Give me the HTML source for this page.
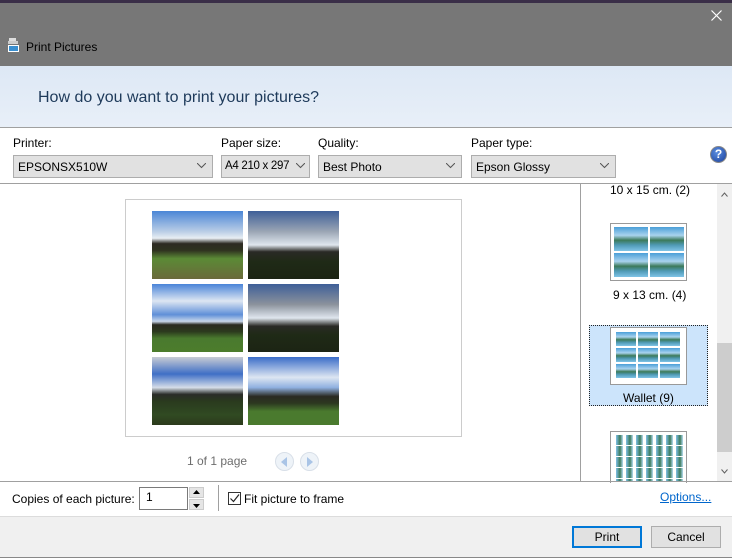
<!DOCTYPE html>
<html><head><meta charset="utf-8"><style>
*{box-sizing:border-box;margin:0;padding:0}
body{width:732px;height:558px;overflow:hidden;font-family:"Liberation Sans",sans-serif;font-size:12px;color:#000;background:#fff;position:relative}
.a{position:absolute}
.sel{position:absolute;top:155px;height:23px;background:#e1e1e1;border:1px solid #adadad;padding:4px 0 0 4px;font-size:12px;white-space:nowrap;overflow:hidden}
.sel svg{position:absolute;right:6px;top:7px}
.lbl{position:absolute;top:136px;font-size:12px}
.ph{position:absolute;width:91px;height:68px}
.btn{position:absolute;top:526px;height:22px;background:#e1e1e1;border:1px solid #adadad;text-align:center;padding-top:3px}
.th{position:absolute;background:#fff;border:1px solid #999;}
.mini{position:absolute;background:linear-gradient(#4a9fd8 0%,#a9d3ee 35%,#3c7a5a 55%,#4f9ab5 75%,#7fc3e6 100%)}
</style></head><body>
<div class="a" style="left:0;top:0;width:732px;height:3px;background:#3a2e48"></div>
<div class="a" style="left:0;top:3px;width:732px;height:63px;background:#777"></div>
<svg class="a" style="left:711px;top:10px" width="11" height="11"><path d="M0.5 0.5L10.5 10.5M10.5 0.5L0.5 10.5" stroke="#fff" stroke-width="1.2"/></svg>
<svg class="a" style="left:7px;top:38px" width="12" height="14"><rect x="2" y="0" width="7" height="3" fill="#ddd"/><rect x="1" y="3" width="10" height="3" fill="#ccc"/><rect x="1" y="7" width="11" height="7" fill="#fff"/><rect x="2" y="8" width="9" height="5" fill="#3a8fd0"/></svg>
<div class="a" style="left:26px;top:40px;color:#000;font-size:12px">Print Pictures</div>
<div class="a" style="left:0;top:66px;width:732px;height:61px;background:linear-gradient(#dde8f5,#e8eff8)"></div>
<div class="a" style="left:38px;top:89px;font-size:16px;color:#1e3a5a">How do you want to print your pictures?</div>
<div class="a" style="left:0;top:127px;width:732px;height:1px;background:#a0a0a0"></div>
<div class="lbl" style="left:13px">Printer:</div>
<div class="lbl" style="left:221px">Paper size:</div>
<div class="lbl" style="left:318px">Quality:</div>
<div class="lbl" style="left:471px">Paper type:</div>
<div class="sel" style="left:13px;width:200px">EPSONSX510W<svg width="9" height="6"><path d="M0 0L4.5 4.5L9 0" stroke="#555" fill="none"/></svg></div>
<div class="sel" style="left:221px;width:89px;padding-left:3px;font-size:11.5px;letter-spacing:-0.3px">A4 210 x 297<svg width="9" height="6" style="right:4px"><path d="M0 0L4.5 4.5L9 0" stroke="#555" fill="none"/></svg></div>
<div class="sel" style="left:318px;width:144px">Best Photo<svg width="9" height="6"><path d="M0 0L4.5 4.5L9 0" stroke="#555" fill="none"/></svg></div>
<div class="sel" style="left:471px;width:145px">Epson Glossy<svg width="9" height="6"><path d="M0 0L4.5 4.5L9 0" stroke="#555" fill="none"/></svg></div>
<div class="a" style="left:710px;top:146px;width:17px;height:17px;border-radius:50%;background:radial-gradient(circle at 40% 35%,#5b8ee0,#1a3f9a);border:1px solid #888;color:#fff;font-weight:bold;font-size:12px;text-align:center;line-height:15px">?</div>
<div class="a" style="left:0;top:183px;width:732px;height:1px;background:#a0a0a0"></div>
<div class="a" style="left:125px;top:199px;width:337px;height:238px;border:1px solid #ccc"></div>
<div class="ph" style="left:152px;top:211px;background:linear-gradient(#4a86d6 0%,#b9cde6 30%,#e8eef4 40%,#2d2a22 48%,#2f3320 58%,#5b8a36 70%,#6a6a3a 100%)"></div>
<div class="ph" style="left:248px;top:211px;background:linear-gradient(#3e5f98 0%,#9aa5b4 30%,#dfe6ee 50%,#2a2a26 60%,#1f2a16 75%,#1c2414 100%)"></div>
<div class="ph" style="left:152px;top:284px;background:linear-gradient(#4a84d8 0%,#dde6f2 25%,#5f8fd8 45%,#c9d7ea 55%,#2a2a20 60%,#2c3a1e 70%,#4a7a2e 80%,#4c7c2c 100%)"></div>
<div class="ph" style="left:248px;top:284px;background:linear-gradient(#3e5f98 0%,#8b929c 30%,#dfe6ee 50%,#2a2a26 62%,#1f2a16 75%,#1c2414 100%)"></div>
<div class="ph" style="left:152px;top:357px;background:linear-gradient(#c8ccd4 0%,#3f6fc6 25%,#d6dde8 45%,#2a2c28 55%,#2a3a1e 65%,#304a22 85%,#2c3a1c 100%)"></div>
<div class="ph" style="left:248px;top:357px;background:linear-gradient(#3a6cc8 0%,#dde6f2 30%,#8fb0e0 45%,#2a2a22 58%,#2c3820 68%,#4a7a2e 80%,#4a7a2e 100%)"></div>
<div class="a" style="left:187px;top:454px;color:#6d6d6d;font-size:12px">1 of 1 page</div>
<div class="a" style="left:275px;top:452px;width:19px;height:19px;border-radius:50%;border:1px solid #d8dfe8;background:#eef3f8"></div>
<svg class="a" style="left:280px;top:457px" width="9" height="10"><path d="M7 0L1 5L7 10Z" fill="#a9c4e6"/></svg>
<div class="a" style="left:300px;top:452px;width:19px;height:19px;border-radius:50%;border:1px solid #d8dfe8;background:#eef3f8"></div>
<svg class="a" style="left:306px;top:457px" width="9" height="10"><path d="M1 0L7 5L1 10Z" fill="#a9c4e6"/></svg>
<div class="a" style="left:580px;top:184px;width:1px;height:297px;background:#a0a0a0"></div>
<div class="a" style="left:717px;top:184px;width:15px;height:297px;background:#f0f0f0"></div>
<div class="a" style="left:717px;top:343px;width:15px;height:109px;background:#cdcdcd"></div>
<svg class="a" style="left:721px;top:192px" width="7" height="5"><path d="M0.5 4.5L3.5 1L6.5 4.5" stroke="#606060" fill="none"/></svg>
<svg class="a" style="left:721px;top:469px" width="7" height="5"><path d="M0.5 0.5L3.5 4L6.5 0.5" stroke="#606060" fill="none"/></svg>
<div class="a" style="left:610px;top:183px;font-size:12px">10 x 15 cm. (2)</div>
<div class="th" style="left:610px;top:223px;width:77px;height:58px"></div>
<div class="mini" style="left:614px;top:227px;width:34px;height:24px"></div>
<div class="mini" style="left:650px;top:227px;width:34px;height:24px"></div>
<div class="mini" style="left:614px;top:253px;width:34px;height:24px"></div>
<div class="mini" style="left:650px;top:253px;width:34px;height:24px"></div>
<div class="a" style="left:613px;top:288px;font-size:12px">9 x 13 cm. (4)</div>
<div class="a" style="left:589px;top:325px;width:119px;height:81px;background:#cce4fb;border:1px dotted #222"></div>
<div class="th" style="left:610px;top:327px;width:77px;height:58px"></div>
<div class="mini" style="left:616px;top:332px;width:20px;height:14px"></div>
<div class="mini" style="left:638px;top:332px;width:20px;height:14px"></div>
<div class="mini" style="left:660px;top:332px;width:20px;height:14px"></div>
<div class="mini" style="left:616px;top:348px;width:20px;height:14px"></div>
<div class="mini" style="left:638px;top:348px;width:20px;height:14px"></div>
<div class="mini" style="left:660px;top:348px;width:20px;height:14px"></div>
<div class="mini" style="left:616px;top:364px;width:20px;height:14px"></div>
<div class="mini" style="left:638px;top:364px;width:20px;height:14px"></div>
<div class="mini" style="left:660px;top:364px;width:20px;height:14px"></div>
<div class="a" style="left:623px;top:391px;font-size:12px">Wallet (9)</div>
<div class="th" style="left:610px;top:431px;width:77px;height:52px;border-bottom:none"></div>
<div class="a" style="left:615px;top:435px;width:68px;height:46px;background:repeating-linear-gradient(90deg,transparent 0,transparent 1px,#7fc0e8 1px,#3c7a5a 5px,#b5dcf2 8px,transparent 8px,transparent 10px);"></div>
<div class="a" style="left:615px;top:435px;width:68px;height:46px;background:repeating-linear-gradient(180deg,transparent 0,transparent 10px,#fff 10px,#fff 11px)"></div>
<div class="a" style="left:0;top:481px;width:732px;height:1px;background:#a0a0a0"></div>
<div class="a" style="left:12px;top:492px;font-size:12px">Copies of each picture:</div>
<div class="a" style="left:139px;top:487px;width:49px;height:23px;border:1px solid #7a7a7a;padding:2px 0 0 6px;font-size:12px">1</div>
<div class="a" style="left:189px;top:487px;width:15px;height:11px;background:#e5e5e5;border:1px solid #ccc"></div>
<div class="a" style="left:189px;top:499px;width:15px;height:11px;background:#e5e5e5;border:1px solid #ccc"></div>
<svg class="a" style="left:193px;top:490px" width="7" height="18"><path d="M0 4L3.5 0L7 4Z M0 14L3.5 18L7 14Z" fill="#000"/></svg>
<div class="a" style="left:218px;top:485px;width:1px;height:26px;background:#a0a0a0"></div>
<div class="a" style="left:228px;top:492px;width:13px;height:13px;border:1px solid #333"></div>
<svg class="a" style="left:229px;top:493px" width="11" height="11"><path d="M1.5 5.5L4.5 8.5L10 1.5" stroke="#222" stroke-width="1.2" fill="none"/></svg>
<div class="a" style="left:244px;top:492px;font-size:12px">Fit picture to frame</div>
<div class="a" style="left:660px;top:490px;font-size:12px;color:#0066cc;text-decoration:underline">Options...</div>
<div class="a" style="left:0;top:516px;width:732px;height:1px;background:#dcdcdc"></div>
<div class="a" style="left:0;top:517px;width:732px;height:40px;background:#f0f0f0"></div>
<div class="a" style="left:0;top:557px;width:732px;height:1px;background:#888"></div>
<div class="btn" style="left:572px;width:70px;border:2px solid #0078d7;padding-top:2px">Print</div>
<div class="btn" style="left:651px;width:70px">Cancel</div>
</body></html>
